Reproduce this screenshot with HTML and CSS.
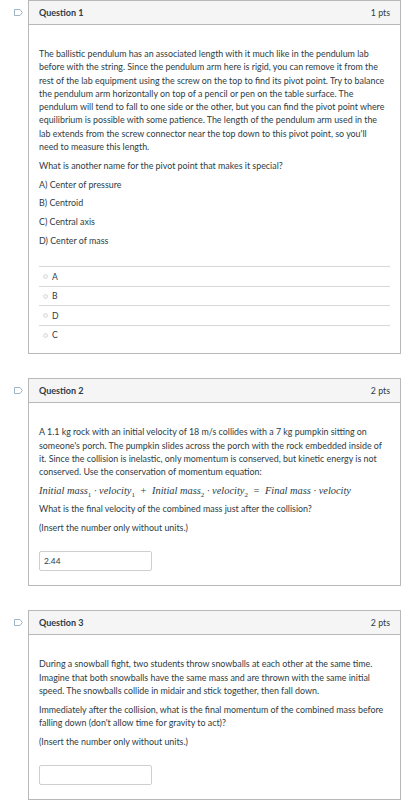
FILE: index.html
```html
<!DOCTYPE html>
<html lang="en">
<head>
    <meta charset="UTF-8">
    <meta name="viewport" content="width=device-width, initial-scale=1.0">
    <title>Quiz</title>
    <link rel="stylesheet" href="styles.css">
</head>
<body>
    <div class="quiz">

        <div class="question">
            <div class="flag">
                <svg width="9" height="7" viewBox="0 0 9 7"><path d="M0.5 0.5 H6 L8.3 3.5 L6 6.5 H0.5 Z" fill="none" stroke="#9fb4c7" stroke-width="1"/></svg>
            </div>
            <div class="card">
                <div class="card-header">
                    <span class="title">Question 1</span>
                    <span class="pts">1 pts</span>
                </div>
                <div class="card-body">
                    <div class="text">
                        <p>The ballistic pendulum has an associated length with it much like in the pendulum lab before with the string. Since the pendulum arm here is rigid, you can remove it from the rest of the lab equipment using the screw on the top to find its pivot point. Try to balance the pendulum arm horizontally on top of a pencil or pen on the table surface. The pendulum will tend to fall to one side or the other, but you can find the pivot point where equilibrium is possible with some patience. The length of the pendulum arm used in the lab extends from the screw connector near the top down to this pivot point, so you'll need to measure this length.</p>
                        <p>What is another name for the pivot point that makes it special?</p>
                        <p>A) Center of pressure</p>
                        <p>B) Centroid</p>
                        <p>C) Central axis</p>
                        <p>D) Center of mass</p>
                    </div>
                    <div class="answers">
                        <label class="answer"><span class="radio"></span>A</label>
                        <label class="answer"><span class="radio"></span>B</label>
                        <label class="answer"><span class="radio"></span>D</label>
                        <label class="answer"><span class="radio"></span>C</label>
                    </div>
                </div>
            </div>
        </div>

        <div class="question">
            <div class="flag">
                <svg width="9" height="7" viewBox="0 0 9 7"><path d="M0.5 0.5 H6 L8.3 3.5 L6 6.5 H0.5 Z" fill="none" stroke="#9fb4c7" stroke-width="1"/></svg>
            </div>
            <div class="card">
                <div class="card-header">
                    <span class="title">Question 2</span>
                    <span class="pts">2 pts</span>
                </div>
                <div class="card-body">
                    <div class="text">
                        <p>A 1.1 kg rock with an initial velocity of 18 m/s collides with a 7 kg pumpkin sitting on someone's porch. The pumpkin slides across the porch with the rock embedded inside of it. Since the collision is inelastic, only momentum is conserved, but kinetic energy is not conserved. Use the conservation of momentum equation:</p>
                        <p class="math">Initial mass<sub>1</sub> &middot; velocity<sub>1</sub> <span class="op">+</span> Initial mass<sub>2</sub> &middot; velocity<sub>2</sub> <span class="op">=</span> Final mass &middot; velocity</p>
                        <p>What is the final velocity of the combined mass just after the collision?</p>
                        <p>(Insert the number only without units.)</p>
                    </div>
                    <input class="answer-input" type="text" value="2.44">
                </div>
            </div>
        </div>

        <div class="question">
            <div class="flag">
                <svg width="9" height="7" viewBox="0 0 9 7"><path d="M0.5 0.5 H6 L8.3 3.5 L6 6.5 H0.5 Z" fill="none" stroke="#9fb4c7" stroke-width="1"/></svg>
            </div>
            <div class="card">
                <div class="card-header">
                    <span class="title">Question 3</span>
                    <span class="pts">2 pts</span>
                </div>
                <div class="card-body">
                    <div class="text">
                        <p>During a snowball fight, two students throw snowballs at each other at the same time. Imagine that both snowballs have the same mass and are thrown with the same initial speed. The snowballs collide in midair and stick together, then fall down.</p>
                        <p>Immediately after the collision, what is the final momentum of the combined mass before falling down (don't allow time for gravity to act)?</p>
                        <p>(Insert the number only without units.)</p>
                    </div>
                    <input class="answer-input" type="text" value="">
                </div>
            </div>
        </div>

    </div>
</body>
</html>
```

FILE: styles.css
```css
* {
    margin: 0;
    padding: 0;
    box-sizing: border-box;
}

body {
    background-color: white;
    font-family: 'Lato', 'Noto Sans', sans-serif;
    color: #2d3b45;
    font-size: 8.9px;
}

.quiz {
    padding-right: 7px;
}

.question {
    display: flex;
    margin-bottom: 24px;
}

.flag {
    width: 28px;
    flex-shrink: 0;
    padding: 9px 0 0 14px;
}

.flag svg {
    display: block;
}

.card {
    flex: 1;
    border: 1px solid #b8b8b8;
}

.card-header {
    display: flex;
    justify-content: space-between;
    align-items: center;
    height: 24px;
    padding: 0 10px;
    background-color: #f5f5f5;
    border-bottom: 1px solid #b8b8b8;
}

.title {
    font-weight: bold;
    font-size: 9px;
}

.pts {
    font-size: 8.8px;
}

.card-body {
    padding: 22px 13px 14px 10px;
}

.text p {
    line-height: 13.3px;
    margin-bottom: 5.5px;
}

.text p.math {
    font-family: 'Liberation Serif', 'DejaVu Serif', serif;
    font-style: italic;
    font-size: 10.4px;
    margin: 5px 0 5px;
}

.math sub {
    font-size: 7px;
    font-style: normal;
    line-height: 0;
}

.math .op {
    font-style: normal;
    padding: 0 3px;
}

.answers {
    margin: 19px -3px -5px 0;
}

.answer {
    display: flex;
    align-items: center;
    gap: 4px;
    height: 19.5px;
    padding-left: 4px;
    border-top: 1px solid #d8d8d8;
    font-size: 8.6px;
}

.radio {
    width: 5px;
    height: 5px;
    border-radius: 50%;
    border: 1px solid #dadada;
    background-color: #f4f4f4;
}

.answer-input {
    display: block;
    margin-top: 17px;
    width: 113px;
    height: 20px;
    padding: 0 4px;
    border: 1px solid #cfcfcf;
    border-radius: 2px;
    font-family: 'Lato', 'Noto Sans', sans-serif;
    font-size: 8.4px;
    color: #2d3b45;
}
```
